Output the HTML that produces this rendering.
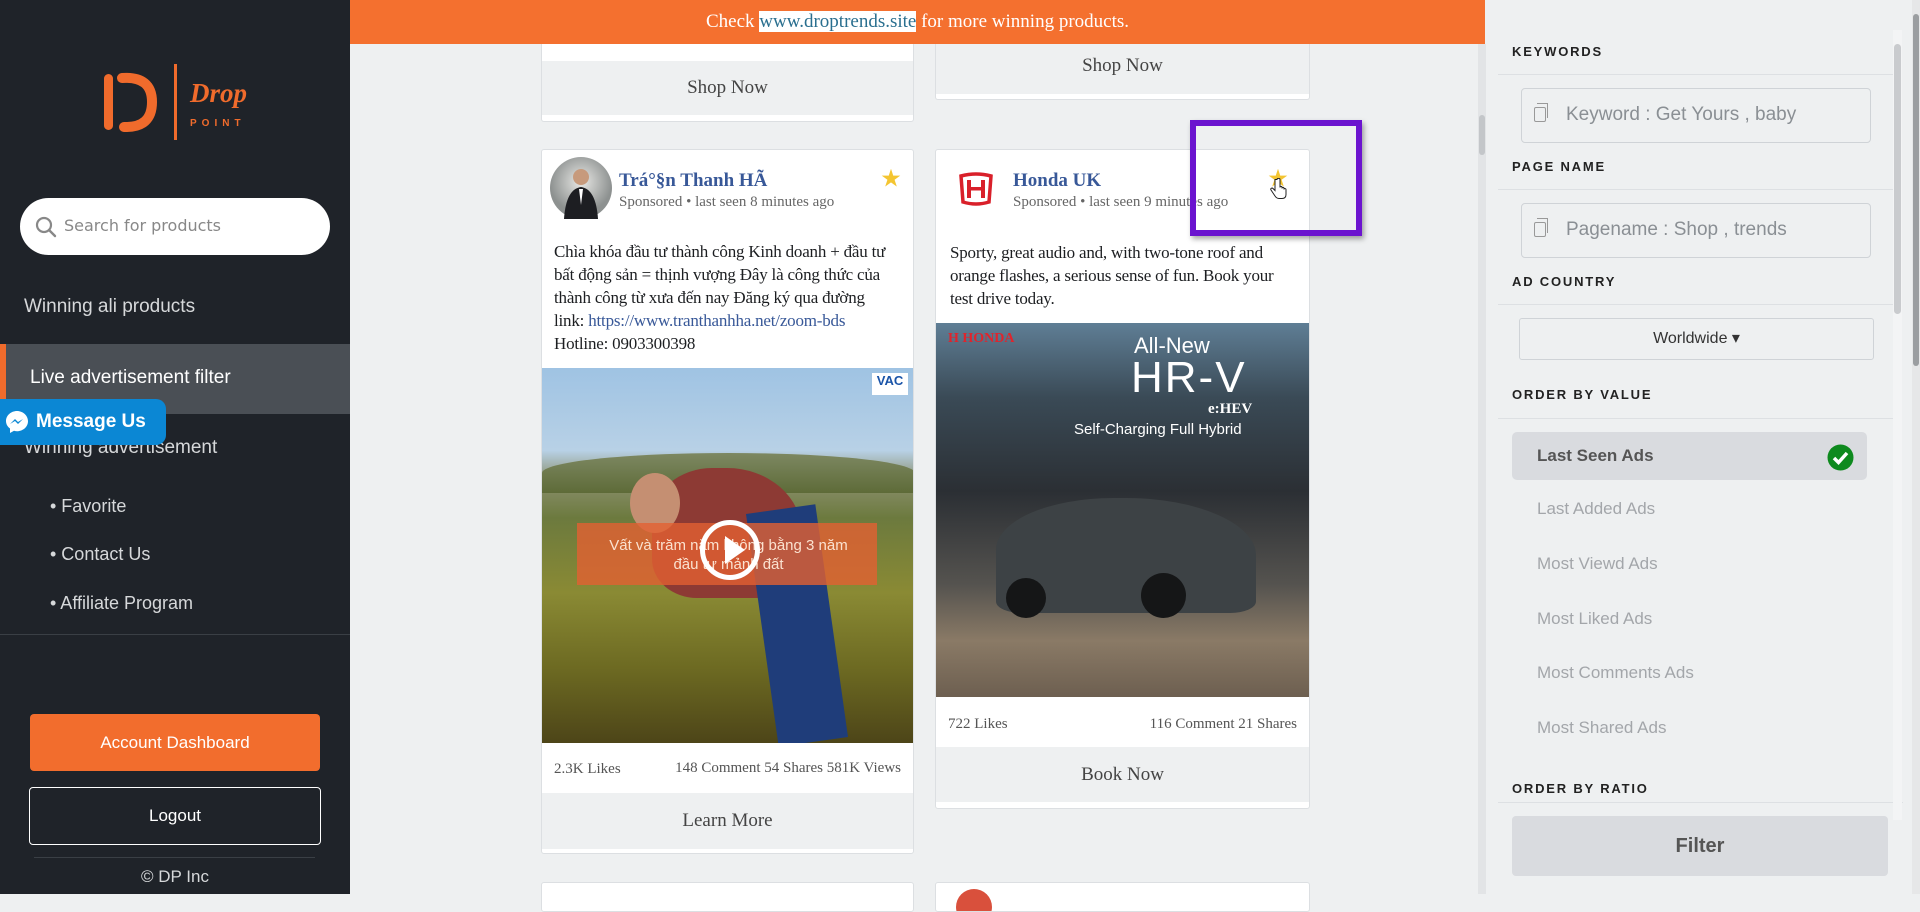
<!DOCTYPE html>
<html><head><meta charset="utf-8">
<style>
*{box-sizing:border-box;margin:0;padding:0}
body{width:1920px;height:894px;overflow:hidden;background:#eef0f1;font-family:"Liberation Sans",sans-serif;position:relative}
.abs{position:absolute}
#side{left:0;top:0;width:350px;height:894px;background:#1f2329;color:#d8dadc}
.menu{position:absolute;font-size:19px;color:#d6d8da}
.card{position:absolute;background:#fff;border:1px solid #dcdfe2;border-radius:3px;font-family:"Liberation Serif","Noto Serif CJK SC",serif;overflow:hidden}
.btn{position:absolute;left:0;right:0;background:#eef0f1;text-align:center;color:#444;font-size:19px}
.lbl{position:absolute;left:1512px;font-size:13px;font-weight:bold;letter-spacing:1.8px;color:#222}
.hr{position:absolute;left:1498px;width:397px;height:1px;background:#dde0e3}
.inp{position:absolute;left:1521px;width:350px;height:55px;border:1px solid #cfd3d7;border-radius:4px;background:#eef0f1;color:#8a8f94;font-size:19px;padding:15px 0 0 44px}
.inp i{position:absolute;left:12px;top:18px;width:12px;height:15px;border:1.5px solid #999;border-radius:2px;background:#eef0f1}
.inp i:before{content:"";position:absolute;left:2px;top:-5px;width:10px;height:14px;border-top:1.5px solid #999;border-right:1.5px solid #999}
.opt{position:absolute;left:1537px;font-size:17px;color:#a3a6aa}
</style></head><body>

<div id="side" class="abs">
  <svg class="abs" style="left:100px;top:62px" width="160" height="80" viewBox="0 0 160 80">
    <rect x="4" y="12" width="9" height="56" rx="4.5" fill="#f06b2c"/>
    <path d="M22 16 Q52 14 52 40 Q52 66 24 65" stroke="#f06b2c" stroke-width="10" fill="none" stroke-linecap="round"/>
    <rect x="74" y="2" width="3" height="76" fill="#f06b2c"/>
    <text x="90" y="40" font-family="Liberation Serif,serif" font-style="italic" font-weight="bold" font-size="27" fill="#f06b2c">Drop</text>
    <text x="90" y="64" font-family="Liberation Sans,sans-serif" font-weight="bold" font-size="10" letter-spacing="5" fill="#f06b2c">POINT</text>
  </svg>
  <div class="abs" style="left:20px;top:198px;width:310px;height:57px;background:#fff;border-radius:29px;color:#888;padding:18px 0 0 44px;font-family:'DejaVu Sans',sans-serif;font-size:16px">Search for products</div>
  <svg class="abs" style="left:34px;top:215px" width="24" height="24" viewBox="0 0 24 24"><circle cx="10" cy="10" r="7" stroke="#888" stroke-width="2.2" fill="none"/><path d="M15 15 L21 21" stroke="#888" stroke-width="2.4" stroke-linecap="round"/></svg>
  <div class="menu" style="left:24px;top:296px">Winning ali products</div>
  <div class="abs" style="left:0;top:344px;width:350px;height:70px;background:#4a4f55"></div>
  <div class="abs" style="left:0;top:344px;width:6px;height:70px;background:#f06b2c"></div>
  <div class="menu" style="left:30px;top:367px;color:#fff">Live advertisement filter</div>
  <div class="menu" style="left:24px;top:437px">Winning advertisement</div>
  <div class="abs" style="left:0;top:399px;width:166px;height:46px;background:#0b87d4;border-radius:0 10px 10px 0;color:#fff;font-size:19px;font-weight:bold;padding:12px 0 0 36px">Message Us</div>
  <svg class="abs" style="left:4px;top:409px" width="26" height="26" viewBox="0 0 26 26"><path d="M13 2C7 2 2 6.5 2 12c0 3 1.5 5.7 4 7.5V24l4-2.2c1 .3 2 .4 3 .4 6 0 11-4.5 11-10S19 2 13 2z" fill="#fff"/><path d="M6 15l5-5 3 3 5-3-5 5-3-3z" fill="#0b87d4"/></svg>
  <div class="menu" style="left:50px;top:496px;font-size:18px">• Favorite</div>
  <div class="menu" style="left:50px;top:544px;font-size:18px">• Contact Us</div>
  <div class="menu" style="left:50px;top:593px;font-size:18px">• Affiliate Program</div>
  <div class="abs" style="left:0;top:634px;width:350px;height:1px;background:#3a3f45"></div>
  <div class="abs" style="left:30px;top:714px;width:290px;height:57px;background:#f26d2d;border-radius:4px;color:#fff;font-size:17px;text-align:center;line-height:57px">Account Dashboard</div>
  <div class="abs" style="left:29px;top:787px;width:292px;height:58px;border:1.5px solid #fff;border-radius:4px;color:#fff;font-size:17px;text-align:center;line-height:55px">Logout</div>
  <div class="abs" style="left:34px;top:857px;width:281px;height:1px;background:#3a3f45"></div>
  <div class="abs" style="left:0;top:867px;width:350px;text-align:center;color:#d6d8da;font-size:17px">© DP Inc</div>
</div>

<div class="abs" style="left:1478px;top:44px;width:8px;height:850px;background:#e2e4e6"></div>
<div class="abs" style="left:1479px;top:115px;width:6px;height:40px;background:#c3c6c9;border-radius:3px"></div>

<div class="card" style="left:541px;top:30px;width:373px;height:92px;border-top:none"><div class="btn" style="top:31px;height:54px;line-height:54px">Shop Now</div></div>
<div class="card" style="left:935px;top:30px;width:375px;height:70px;border-top:none"><div class="btn" style="top:14px;height:50px;line-height:44px">Shop Now</div></div>

<!-- banner -->
<div class="abs" style="left:350px;top:0;width:1135px;height:44px;background:#f4702f;color:#fff;text-align:center;font-family:'Liberation Serif',serif;font-size:19px;line-height:44px;z-index:5">Check <span style="background:#fff;color:#2a6f8f">www.droptrends.site</span> for more winning products.</div>

<!-- card 1 -->
<div class="card" style="left:541px;top:149px;width:373px;height:705px">
  <svg class="abs" style="left:8px;top:7px" width="62" height="62" viewBox="0 0 62 62"><defs><radialGradient id="g0" cx=".5" cy=".4"><stop offset="0" stop-color="#e9e9e6"/><stop offset="1" stop-color="#8d9190"/></radialGradient></defs><circle cx="31" cy="31" r="31" fill="url(#g0)"/><circle cx="31" cy="20" r="8" fill="#c79a7c"/><path d="M14 62 Q16 32 31 30 Q46 32 48 62Z" fill="#1d1e22"/><path d="M29 32 L31 48 L33 32Z" fill="#fff"/></svg>
  <div class="abs" style="left:77px;top:20px;font-size:19px;font-weight:bold;color:#385898">Trá°§n Thanh HÃ</div>
  <div class="abs" style="left:77px;top:44px;font-size:15px;color:#666">Sponsored • last seen 8 minutes ago</div>
  <div class="abs" style="left:339px;top:12px;color:#f4c531;font-size:20px">★</div>
  <div class="abs" style="left:12px;top:90px;width:340px;font-size:17px;line-height:23px;color:#1c1e21;letter-spacing:-0.2px">Chìa khóa đầu tư thành công Kinh doanh + đầu tư bất động sản = thịnh vượng Đây là công thức của thành công từ xưa đến nay Đăng ký qua đường link: <span style="color:#385898">https://www.tranthanhha.net/zoom-bds</span> Hotline: 0903300398</div>
  <div class="abs" style="left:0;top:218px;width:373px;height:375px;background:linear-gradient(180deg,#9fc3e3 0%,#b8d1e6 22%,#8a8f6d 30%,#6c7a3e 40%,#8a8a34 60%,#6d6a22 80%,#4d4518 100%);overflow:hidden">
    <div class="abs" style="left:0;top:85px;width:373px;height:40px;background:linear-gradient(180deg,#7d8862,#5e6b38);border-radius:50% 50% 0 0"></div>
    <div class="abs" style="left:110px;top:100px;width:150px;height:130px;background:#8d3a34;border-radius:40% 50% 30% 30%"></div>
    <div class="abs" style="left:88px;top:105px;width:50px;height:60px;background:#c58f72;border-radius:50%"></div>
    <div class="abs" style="left:220px;top:140px;width:70px;height:235px;background:#1f3d7a;transform:rotate(-8deg)"></div>
    <div class="abs" style="left:35px;top:155px;width:300px;height:62px;background:rgba(226,96,50,.8)"></div>
    <div class="abs" style="left:0;top:168px;width:373px;text-align:center;color:#fbe2d0;font-family:'Liberation Sans',sans-serif;font-size:15px;line-height:19px">Vất và trăm năm không bằng 3 năm<br>đầu tư mảnh đất</div>
    <div class="abs" style="left:158px;top:152px;width:60px;height:60px;border:5px solid #fff;border-radius:50%"></div>
    <div class="abs" style="left:183px;top:168px;width:0;height:0;border-left:20px solid #fff;border-top:14px solid transparent;border-bottom:14px solid transparent"></div>
    <div class="abs" style="left:330px;top:5px;width:36px;height:22px;background:#fff;color:#1a54a8;font-weight:bold;font-size:13px;font-family:'Liberation Sans',sans-serif;text-align:center">VAC</div>
  </div>
  <div class="abs" style="left:12px;top:611px;font-size:15px;color:#555">2.3K Likes</div>
  <div class="abs" style="right:12px;top:610px;font-size:15px;color:#555">148 Comment 54 Shares 581K Views</div>
  <div class="btn" style="top:643px;height:56px;line-height:56px">Learn More</div>
</div>

<!-- card 2 -->
<div class="card" style="left:935px;top:149px;width:375px;height:660px">
  <svg class="abs" style="left:21px;top:22px" width="38" height="34" viewBox="0 0 38 34"><path d="M4 4 Q19 0 34 4 L32 30 Q19 34 6 30Z" fill="none" stroke="#d9202a" stroke-width="3.5"/><rect x="10" y="8" width="4" height="18" fill="#d9202a"/><rect x="24" y="8" width="4" height="18" fill="#d9202a"/><rect x="12" y="15" width="14" height="3.5" fill="#d9202a"/></svg>
  <div class="abs" style="left:77px;top:20px;font-size:19px;font-weight:bold;color:#385898">Honda UK</div>
  <div class="abs" style="left:77px;top:44px;font-size:15px;color:#666">Sponsored • last seen 9 minutes ago</div>
  <div class="abs" style="left:332px;top:12px;color:#f4c531;font-size:20px">★</div>
  <div class="abs" style="left:14px;top:91px;width:350px;font-size:17px;line-height:23px;color:#1c1e21;letter-spacing:-0.2px">Sporty, great audio and, with two-tone roof and orange flashes, a serious sense of fun. Book your test drive today.</div>
  <div class="abs" style="left:0;top:173px;width:375px;height:374px;background:linear-gradient(180deg,#5f7e95 0%,#3a4a56 20%,#2b2f34 45%,#55534f 70%,#8a7a66 85%,#6d5f50 100%);overflow:hidden">
    <div class="abs" style="left:12px;top:8px;color:#e0242c;font-weight:bold;font-size:14px;font-family:'Liberation Serif',serif">H HONDA</div>
    <div class="abs" style="left:198px;top:10px;color:#fff;font-size:22px;font-family:'Liberation Sans',sans-serif">All-New</div>
    <div class="abs" style="left:195px;top:30px;color:#fff;font-size:44px;font-family:'Liberation Sans',sans-serif;letter-spacing:2px">HR-V</div>
    <div class="abs" style="left:272px;top:78px;color:#fff;font-size:15px;font-weight:bold">e:HEV</div>
    <div class="abs" style="left:138px;top:98px;color:#fff;font-size:15px;font-family:'Liberation Sans',sans-serif">Self-Charging Full Hybrid</div>
    <div class="abs" style="left:60px;top:175px;width:260px;height:115px;background:#3d4245;border-radius:45% 50% 10% 10%"></div>
    <div class="abs" style="left:70px;top:255px;width:40px;height:40px;background:#151617;border-radius:50%"></div>
    <div class="abs" style="left:205px;top:250px;width:45px;height:45px;background:#151617;border-radius:50%"></div>
  </div>
  <div class="abs" style="left:12px;top:566px;font-size:15px;color:#555">722 Likes</div>
  <div class="abs" style="right:12px;top:566px;font-size:15px;color:#555">116 Comment 21 Shares</div>
  <div class="btn" style="top:597px;height:55px;line-height:55px">Book Now</div>
</div>

<div class="card" style="left:541px;top:882px;width:373px;height:30px"></div>
<div class="card" style="left:935px;top:882px;width:375px;height:30px"><div class="abs" style="left:20px;top:6px;width:36px;height:36px;border-radius:50%;background:#d9503c"></div></div>

<div class="abs" style="left:1190px;top:120px;width:172px;height:116px;border:6px solid #6b14cf;box-shadow:2px 3px 5px rgba(0,0,0,.35)"></div>
<svg class="abs" style="left:1270px;top:178px" width="18" height="22" viewBox="0 0 18 22"><path d="M5 1.5v11l-2-2c-1-1-3 0-2 1.5l4 6c1 1.5 2 2.5 4 2.5h3c3 0 4-2 4-4v-5c0-1-2-1.5-2 0v-1c0-1.5-2-1.5-2 0v-1c0-1.5-2-1.5-2 0v-8c0-1.5-3-1.5-3 0z" fill="#fff" stroke="#222" stroke-width="1"/></svg>

<div class="lbl" style="top:44px">KEYWORDS</div>
<div class="hr" style="top:74px"></div>
<div class="inp" style="top:88px"><i></i>Keyword : Get Yours , baby</div>
<div class="lbl" style="top:159px">PAGE NAME</div>
<div class="hr" style="top:189px"></div>
<div class="inp" style="top:203px"><i></i>Pagename : Shop , trends</div>
<div class="lbl" style="top:274px">AD COUNTRY</div>
<div class="hr" style="top:304px"></div>
<div class="abs" style="left:1519px;top:318px;width:355px;height:42px;border:1px solid #cfd3d7;border-radius:3px;text-align:center;line-height:40px;font-size:16px;color:#333">Worldwide ▾</div>
<div class="lbl" style="top:387px">ORDER BY VALUE</div>
<div class="hr" style="top:418px"></div>
<div class="abs" style="left:1512px;top:432px;width:355px;height:48px;background:#d9dbdf;border-radius:5px;color:#555;font-weight:bold;font-size:17px;padding:14px 0 0 25px">Last Seen Ads</div>
<svg class="abs" style="left:1827px;top:444px" width="27" height="27" viewBox="0 0 27 27"><circle cx="13.5" cy="13.5" r="13" fill="#0e8a1e"/><path d="M7 14l4.5 4.5L20 9" stroke="#fff" stroke-width="3.5" fill="none"/></svg>
<div class="opt" style="top:499px">Last Added Ads</div>
<div class="opt" style="top:554px">Most Viewd Ads</div>
<div class="opt" style="top:609px">Most Liked Ads</div>
<div class="opt" style="top:663px">Most Comments Ads</div>
<div class="opt" style="top:718px">Most Shared Ads</div>
<div class="lbl" style="top:781px">ORDER BY RATIO</div>
<div class="hr" style="top:802px;width:405px"></div>
<div class="abs" style="left:1512px;top:816px;width:376px;height:60px;background:#d9dbdf;border-radius:4px;text-align:center;line-height:60px;color:#555;font-weight:bold;font-size:20px">Filter</div>
<div class="abs" style="left:1893px;top:30px;width:9px;height:790px;background:#f3f4f5"></div>
<div class="abs" style="left:1894px;top:44px;width:7px;height:270px;background:#c9cbce;border-radius:4px"></div>
<div class="abs" style="left:1912px;top:0;width:8px;height:894px;background:#e6e7e8"></div>
<div class="abs" style="left:1913px;top:14px;width:6px;height:352px;background:#9b9ea1;border-radius:3px"></div>
</body></html>
